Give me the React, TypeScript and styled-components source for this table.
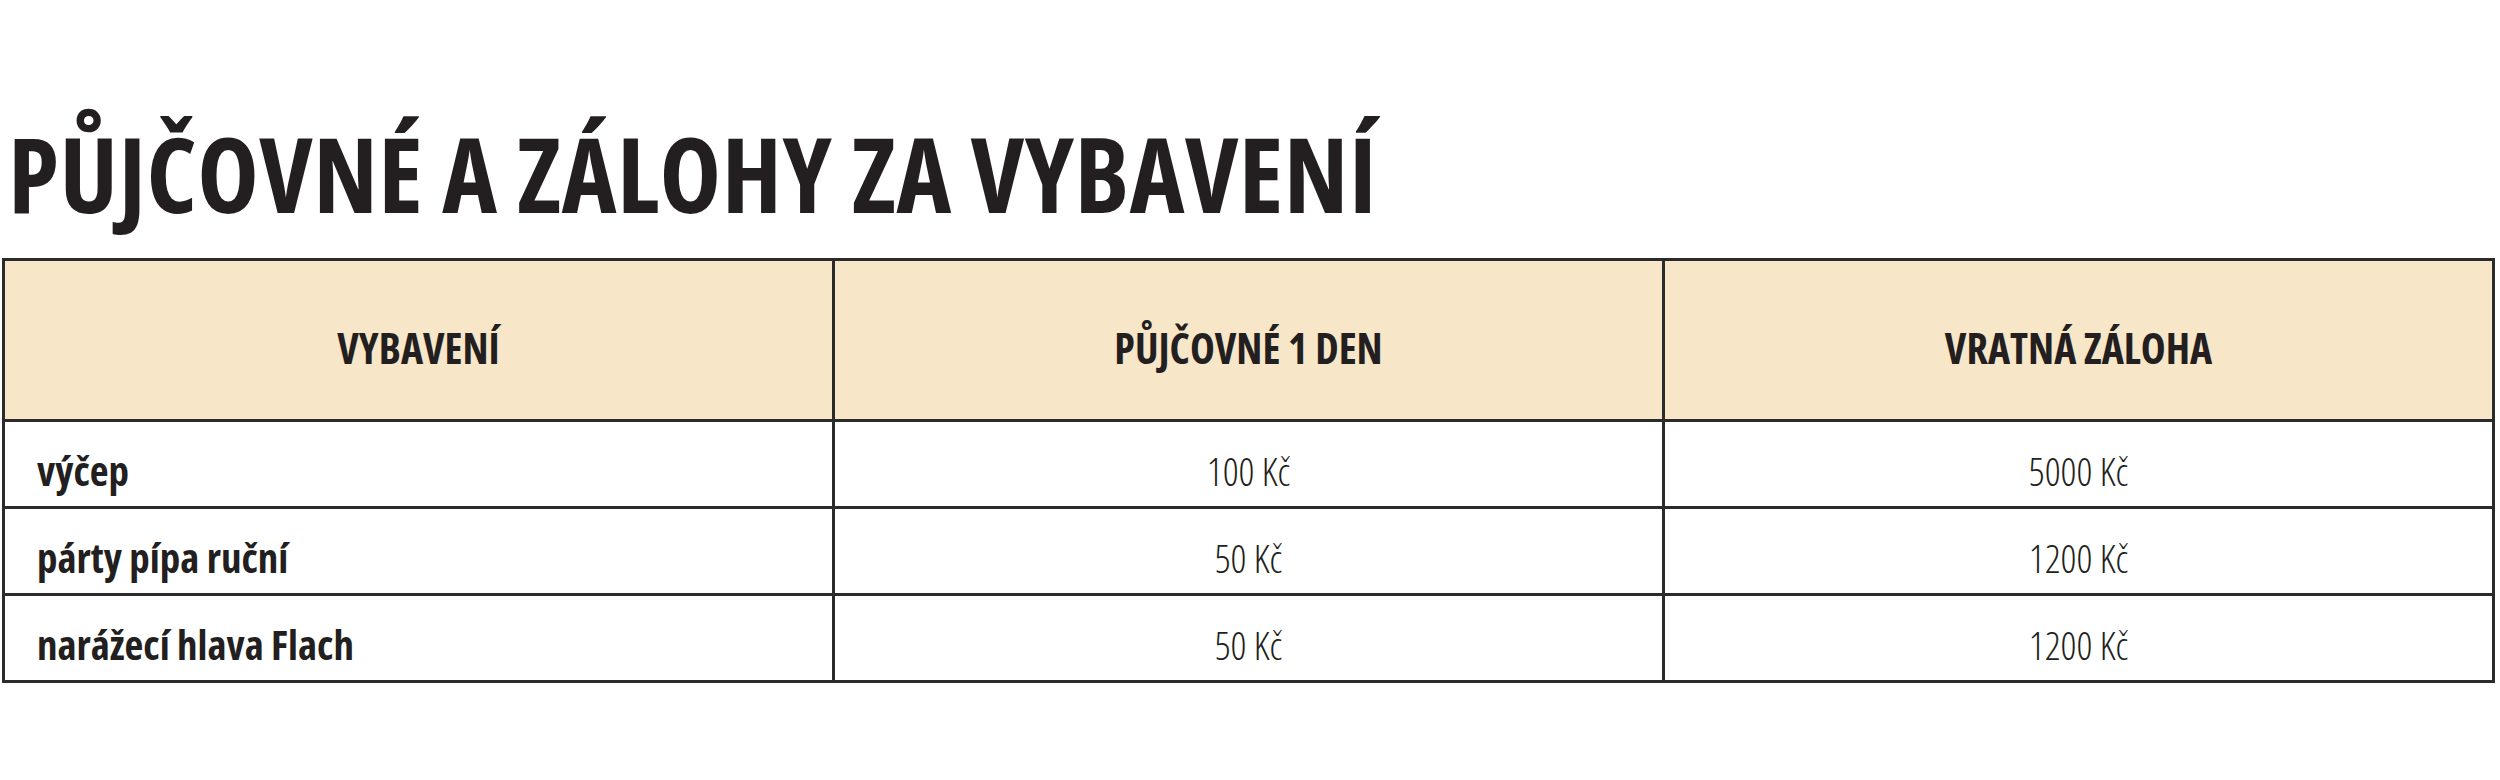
import React from 'react';
import styled, { createGlobalStyle } from 'styled-components';

const GlobalStyle = createGlobalStyle`
  html, body {
    margin: 0;
    padding: 0;
    background: #ffffff;
  }
  body {
    font-family: "Open Sans", "Liberation Sans", sans-serif;
    color: #231f20;
  }
`;

const Page = styled.div`
  width: 2500px;
  height: 780px;
  padding: 108px 5px 0 2px;
  box-sizing: border-box;
`;

const Title = styled.h1`
  margin: 0 0 0 6px;
  font-size: 104px;
  line-height: 130px;
  font-weight: 700;
  font-stretch: 75%;
  letter-spacing: 0.5px;
  color: #231f20;
  height: 150px;
`;

const Table = styled.table`
  width: 2493px;
  border-collapse: collapse;
  table-layout: fixed;
  border: 3px solid #2b2b2b;
`;

const HeadCell = styled.th`
  height: 144px;
  background: #f7e6c8;
  border: 3px solid #2b2b2b;
  font-size: 42px;
  font-weight: 700;
  font-stretch: 75%;
  text-align: center;
  vertical-align: middle;
  padding: 14px 0 0 0;
`;

const Cell = styled.td<{ $name?: boolean }>`
  height: 72px;
  border: 3px solid #2b2b2b;
  padding: 12px 0 0 ${(p) => (p.$name ? '32px' : '0')};
  text-align: ${(p) => (p.$name ? 'left' : 'center')};
  vertical-align: middle;
  font-size: ${(p) => (p.$name ? '41px' : '39px')};
  font-weight: ${(p) => (p.$name ? 700 : 300)};
  font-stretch: 75%;
`;

const rows = [
  { name: 'výčep', rent: '100 Kč', deposit: '5000 Kč' },
  { name: 'párty pípa ruční', rent: '50 Kč', deposit: '1200 Kč' },
  { name: 'narážecí hlava Flach', rent: '50 Kč', deposit: '1200 Kč' },
];

export default function App() {
  return (
    <>
      <GlobalStyle />
      <Page>
        <Title>PŮJČOVNÉ A ZÁLOHY ZA VYBAVENÍ</Title>
        <Table>
          <thead>
            <tr>
              <HeadCell>VYBAVENÍ</HeadCell>
              <HeadCell>PŮJČOVNÉ 1 DEN</HeadCell>
              <HeadCell>VRATNÁ ZÁLOHA</HeadCell>
            </tr>
          </thead>
          <tbody>
            {rows.map((r) => (
              <tr key={r.name}>
                <Cell $name>{r.name}</Cell>
                <Cell>{r.rent}</Cell>
                <Cell>{r.deposit}</Cell>
              </tr>
            ))}
          </tbody>
        </Table>
      </Page>
    </>
  );
}
